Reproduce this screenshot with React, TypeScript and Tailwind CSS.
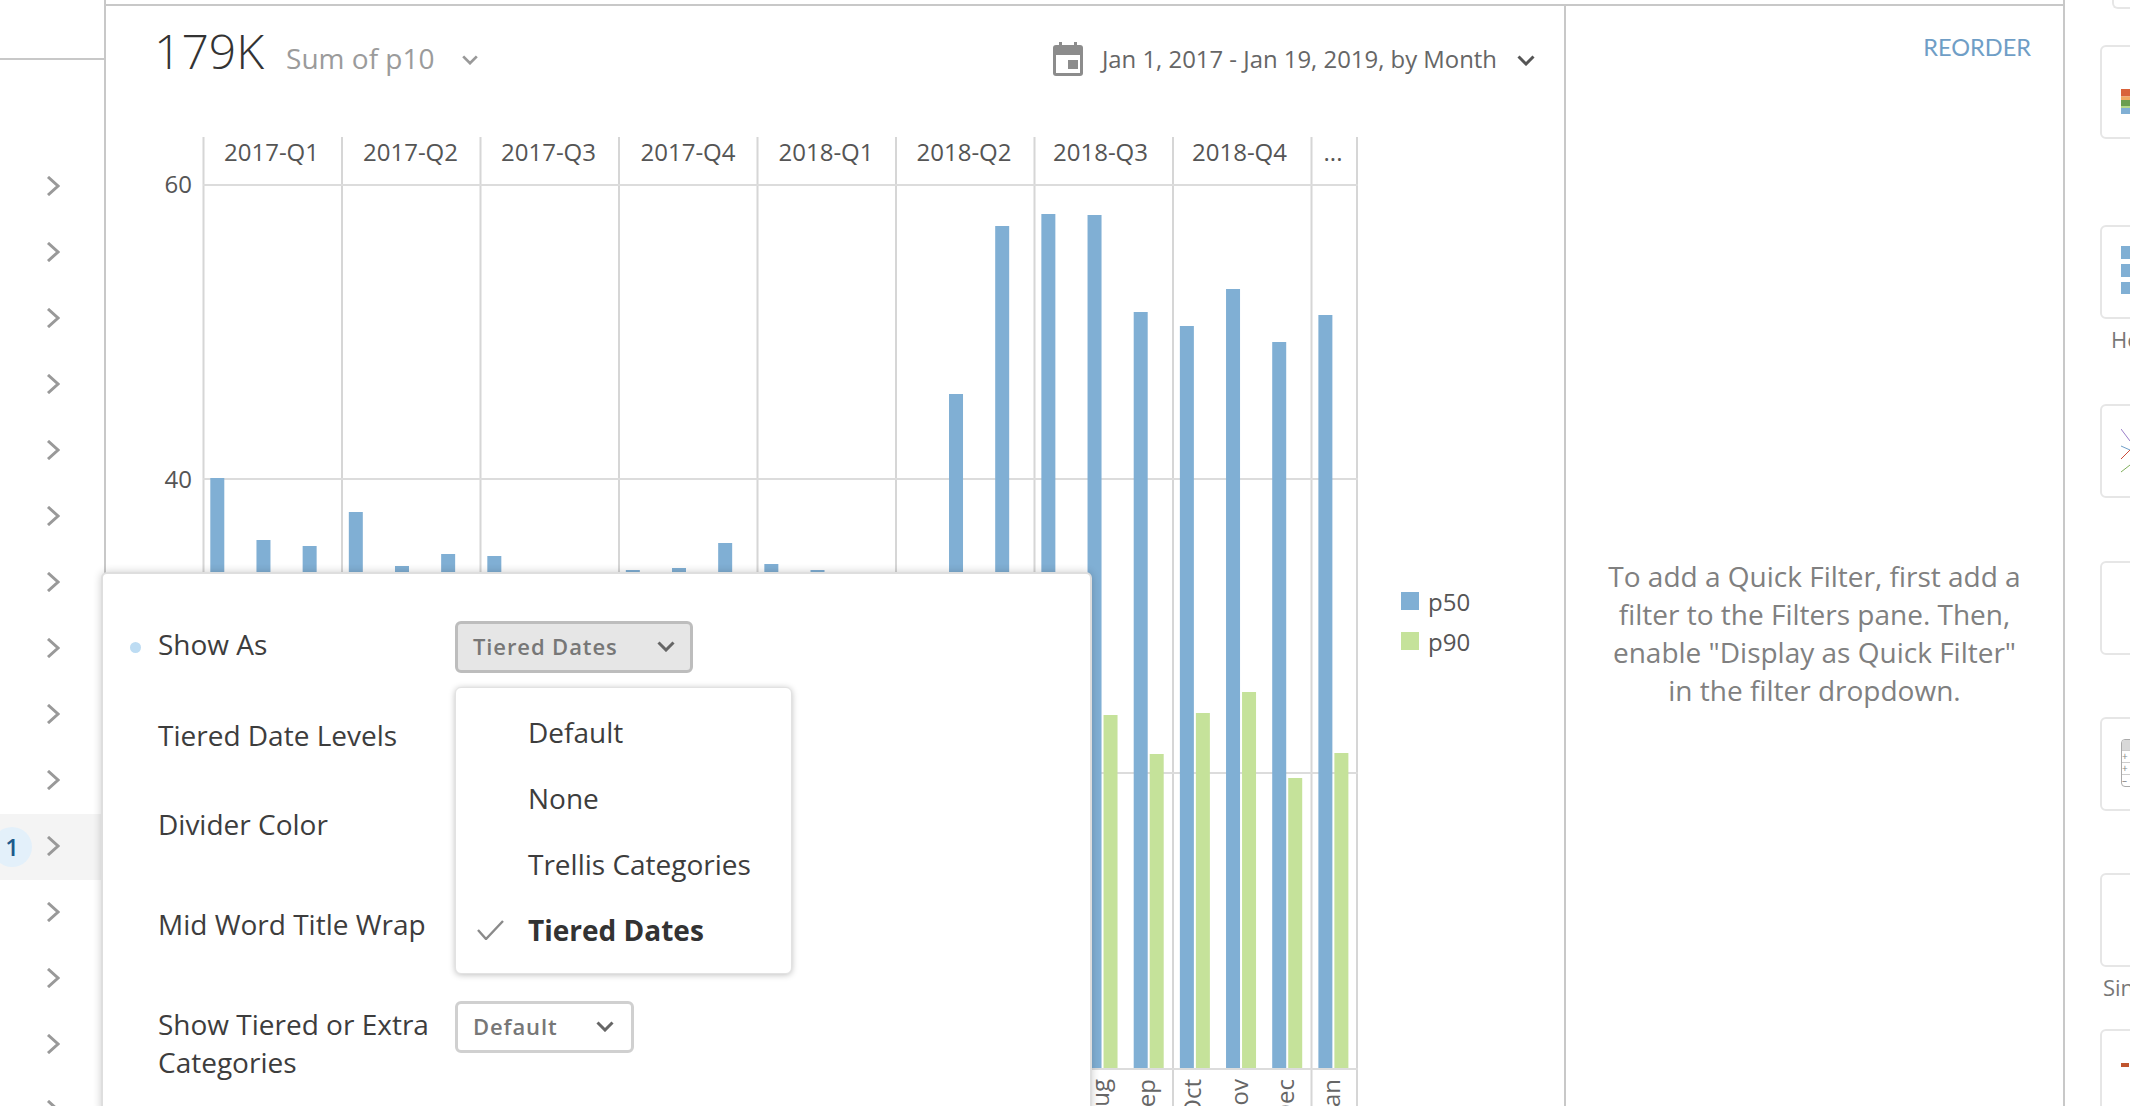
import React from "react";

const BLUE = "#80afd4";
const GREEN = "#c5e29a";
const GRID = "#d6d6d6";

// page coordinates, the svg viewBox starts at x=106 y=130
const dividers = [203.5, 342, 480.5, 619, 757.5, 896, 1034.5, 1173, 1311.5, 1357];
const hLines = [185, 479, 773, 1069];
const quarters = [
  { label: "2017-Q1", x: 271.5 },
  { label: "2017-Q2", x: 410.5 },
  { label: "2017-Q3", x: 548.5 },
  { label: "2017-Q4", x: 688 },
  { label: "2018-Q1", x: 826 },
  { label: "2018-Q2", x: 964 },
  { label: "2018-Q3", x: 1100.5 },
  { label: "2018-Q4", x: 1239.5 },
  { label: "...", x: 1333 },
];
const blueTops = [478, 540, 546, 512, 566, 554, 556, 600, 610, 570, 568, 543, 564, 570, 590, 595, 394, 226, 214, 215, 312, 326, 289, 342, 315];
const greenTops = [800, 820, 830, 810, 860, 850, 850, 900, 900, 860, 860, 840, 850, 860, 880, 880, 760, 720, 700, 715, 754, 713, 692, 778, 753];
const months = [
  { label: "Aug", i: 19 },
  { label: "Sep", i: 20 },
  { label: "Oct", i: 21 },
  { label: "Nov", i: 22 },
  { label: "Dec", i: 23 },
  { label: "Jan", i: 24 },
];

const menuItems = ["Default", "None", "Trellis Categories", "Tiered Dates"];

function Down({ className, color }: { className: string; color: string }) {
  return (
    <svg viewBox="0 0 18 11" className={className} fill="none" stroke={color} strokeWidth="3">
      <polyline points="1.5,1.5 9,9 16.5,1.5" />
    </svg>
  );
}

function Chart() {
  return (
    <svg viewBox="106 130 1458 976" className="block h-[976px] w-[1458px] font-['Open_Sans',sans-serif]">
      {dividers.map((x) => (
        <rect key={x} x={x - 1} y={137} width={2} height={969} fill={GRID} />
      ))}
      {hLines.map((y) => (
        <rect key={y} x={203} y={y - 1} width={1155} height={2} fill="#dcdcdc" />
      ))}
      {quarters.map((q) => (
        <text key={q.label} x={q.x} y={161} textAnchor="middle" className="fill-[#555555] text-[24px]">
          {q.label}
        </text>
      ))}
      <text x={192} y={193} textAnchor="end" className="fill-[#555555] text-[24px]">60</text>
      <text x={192} y={488} textAnchor="end" className="fill-[#555555] text-[24px]">40</text>
      {blueTops.map((top, i) => (
        <rect key={i} x={210.3 + 46.17 * i} y={top} width={14} height={1068 - top} fill={BLUE} />
      ))}
      {greenTops.map((top, i) => (
        <rect key={i} x={226.3 + 46.17 * i} y={top} width={14} height={1068 - top} fill={GREEN} />
      ))}
      {months.map((m) => {
        const x = 210.3 + 46.17 * m.i + 21.5;
        return (
          <text key={m.label} x={x} y={1079} textAnchor="end" transform={`rotate(-90 ${x} 1079)`} className="fill-[#666666] text-[24px]">
            {m.label}
          </text>
        );
      })}
      <rect x={1401} y={592} width={18} height={18} fill={BLUE} />
      <text x={1428} y={611} className="fill-[#555555] text-[24px]">p50</text>
      <rect x={1401} y={632} width={18} height={18} fill={GREEN} />
      <text x={1428} y={651} className="fill-[#555555] text-[24px]">p90</text>
    </svg>
  );
}

function Popover() {
  return (
    <div className="absolute left-[101px] top-[572px] h-[540px] w-[991px] rounded-t-md border-2 border-[#dedede] bg-white pt-[47px] text-[28px] text-[#3d3d3d] shadow-[0_0_8px_rgba(0,0,0,0.2)]">
      <div className="flex h-[52px] items-center pl-[27px]">
        <span className="mr-[17px] h-[11px] w-[11px] rounded-full bg-[#bddcf3]" />
        <span className="w-[297px] -translate-y-[3px]">Show As</span>
        <div className="flex h-[52px] w-[238px] items-center justify-between rounded-md border-[3px] border-[#bdbdbd] bg-[#e6e6e6] pb-[2px] pl-[15px] pr-[14px] text-[22px] font-semibold tracking-[0.9px] text-[#777777]">
          Tiered Dates
          <Down className="h-[11px] w-[20px]" color="#666666" />
        </div>
      </div>
      <div className="mt-[43px] flex h-[38px] items-center pl-[55px]">Tiered Date Levels</div>
      <div className="mt-[51px] flex h-[38px] items-center pl-[55px]">Divider Color</div>
      <div className="mt-[62px] flex h-[38px] items-center pl-[55px]">Mid Word Title Wrap</div>
      <div className="mt-[58px] flex items-start pl-[55px]">
        <div className="mt-[4px] w-[297px] pr-[10px] leading-[38px]">Show Tiered or Extra Categories</div>
        <div className="flex h-[52px] w-[179px] items-center justify-between rounded-md border-[3px] border-[#d0d0d0] bg-white pb-[2px] pl-[15px] pr-[16px] text-[22px] font-semibold tracking-[0.9px] text-[#777777]">
          Default
          <Down className="h-[11px] w-[20px]" color="#666666" />
        </div>
      </div>
      <div className="absolute left-[352px] top-[113px] w-[337px] rounded-md border border-[#e2e2e2] bg-white pb-[10px] pt-[11px] shadow-[0_1px_6px_rgba(0,0,0,0.25)]">
        {menuItems.map((item) => {
          const active = item === "Tiered Dates";
          return (
            <div key={item} className="flex h-[66px] items-center">
              <div className="w-[72px] pl-[21px]">
                {active && (
                  <svg viewBox="0 0 27 20" className="h-[20px] w-[27px]" fill="none" stroke="#8a8a8a" strokeWidth="2.4">
                    <polyline points="1,10 9,19 26,1" />
                  </svg>
                )}
              </div>
              <span className={active ? "font-bold text-[#333333]" : ""}>{item}</span>
            </div>
          );
        })}
      </div>
    </div>
  );
}

function Card({ className, label, labelClass, children }: { className: string; label?: string; labelClass?: string; children?: React.ReactNode }) {
  return (
    <div className={className}>
      <div className="ml-[35px] h-[94px] w-[130px] rounded-md border-2 border-[#e6e6e6] bg-white pl-[19px]">{children}</div>
      {label && <div className={`mt-[5px] whitespace-nowrap text-[22px] leading-[30px] text-[#777777] ${labelClass}`}>{label}</div>}
    </div>
  );
}

export default function App() {
  return (
    <div className="relative flex h-[1106px] w-[2130px] overflow-hidden bg-white font-['Open_Sans',sans-serif]">
      <aside className="w-[104px] shrink-0">
        <div className="h-[60px] border-b-2 border-[#c8c8c8]" />
        <div className="mt-[94px]">
          {Array.from({ length: 15 }).map((_, i) => (
            <div key={i} className={`flex h-[66px] items-center justify-end pr-[44px] ${i === 10 ? "relative bg-[#f4f4f4]" : ""}`}>
              {i === 10 && (
                <span className="absolute -left-[8px] top-[13px] flex h-[40px] w-[40px] items-center justify-center rounded-full bg-[#e3f0fa] text-[24px] font-semibold text-[#1d5a8c]">
                  1
                </span>
              )}
              <svg viewBox="0 0 14 20" className="mb-[2px] h-[20px] w-[14px]" fill="none" stroke="#999999" strokeWidth="3">
                <polyline points="2,1 12,10 2,19" />
              </svg>
            </div>
          ))}
        </div>
      </aside>

      <main className="h-full w-[1961px] shrink-0 border-x-2 border-[#c8c8c8] pt-[4px]">
        <div className="flex h-[1102px] border-t-2 border-[#c8c8c8]">
          <section className="w-[1458px] shrink-0">
            <header className="flex h-[124px] items-start justify-between pl-[48px] pr-[29px] pt-[21px]">
              <div className="flex items-baseline">
                <span className="text-[48px] font-light leading-[48px] text-[#333333]">179K</span>
                <span className="ml-[22px] text-[28px] leading-[28px] text-[#9b9b9b]">Sum of p10</span>
                <Down className="ml-[26px] h-[10px] w-[18px] -translate-y-[4px]" color="#999999" />
              </div>
              <div className="mt-[14px] flex items-center">
                <svg viewBox="0 0 30 34" className="h-[34px] w-[30px]">
                  <rect x="0" y="3" width="30" height="31" rx="3" fill="#8c8c8c" />
                  <rect x="6" y="0" width="3" height="6" fill="#8c8c8c" />
                  <rect x="21" y="0" width="3" height="6" fill="#8c8c8c" />
                  <rect x="3" y="13" width="24" height="18" fill="#ffffff" />
                  <rect x="15" y="18" width="10" height="9" fill="#8c8c8c" />
                </svg>
                <span className="ml-[19px] text-[23.9px] text-[#666666]">Jan 1, 2017 - Jan 19, 2019, by Month</span>
                <Down className="ml-[20px] mt-[4px] h-[11px] w-[18px]" color="#555555" />
              </div>
            </header>
            <Chart />
          </section>

          <section className="flex-1 border-l-2 border-[#c8c8c8]">
            <div className="flex justify-end pr-[32px] pt-[24px] font-['Lato',sans-serif] text-[23.5px] leading-[34px] text-[#6f9ec6]">REORDER</div>
            <p className="mt-[493px] px-[38px] text-center text-[28px] leading-[38px] text-[#808080]">
              To add a Quick Filter, first add a filter to the Filters pane. Then, enable "Display as Quick Filter" in the filter dropdown.
            </p>
          </section>
        </div>
      </main>

      <aside className="flex-1 overflow-hidden">
        <div className="ml-[47px] h-[9px] w-[60px] rounded-bl-md border-b-2 border-l-2 border-[#e6e6e6]" />
        <Card className="mt-[36px]">
          <svg viewBox="0 0 30 25" className="mt-[42px] h-[25px] w-[30px]">
            <rect y="0" width="30" height="7.5" fill="#d9623a" />
            <rect y="7.5" width="30" height="3.5" fill="#f0a860" />
            <rect y="11" width="30" height="6" fill="#6a9e4f" />
            <rect y="17" width="30" height="2" fill="#b5d98a" />
            <rect y="19" width="30" height="6" fill={BLUE} />
          </svg>
        </Card>
        <Card className="mt-[86px]" label="Heat Map" labelClass="pl-[46px]">
          <svg viewBox="0 0 30 48" className="mt-[19px] h-[48px] w-[30px]" fill={BLUE}>
            <rect y="0" width="30" height="13" />
            <rect y="18" width="30" height="13" />
            <rect y="36" width="30" height="12" />
          </svg>
        </Card>
        <Card className="mt-[50px]">
          <svg viewBox="0 0 30 46" className="mt-[22px] h-[46px] w-[30px]" strokeWidth="1">
            <line x1="0" y1="1" x2="9" y2="13" stroke="#9a7fc8" />
            <line x1="0" y1="18" x2="9" y2="22" stroke="#6f9ec6" />
            <line x1="0" y1="31" x2="9" y2="22" stroke="#cc4b3a" />
            <line x1="0" y1="44" x2="9" y2="37" stroke="#7fae5a" />
          </svg>
        </Card>
        <Card className="mt-[63px]" />
        <Card className="mt-[62px]">
          <div className="mt-[20px] flex h-[48px] w-[30px] flex-col overflow-hidden rounded-sm border border-[#aaaaaa] text-[10px] leading-[11px] text-[#888888]">
            <div className="h-[12px] bg-[#d8d8d8]" />
            <div className="h-[12px] border-t border-[#cccccc]">+</div>
            <div className="h-[12px] border-t border-[#cccccc]">+</div>
            <div className="h-[12px] border-t border-[#cccccc]">–</div>
          </div>
        </Card>
        <Card className="mt-[62px]" label="Single Value" labelClass="pl-[38px]" />
        <Card className="mt-[27px]">
          <div className="mt-[32px] h-[4px] w-[8px] bg-[#c0552e]" />
        </Card>
      </aside>

      <Popover />
    </div>
  );
}
